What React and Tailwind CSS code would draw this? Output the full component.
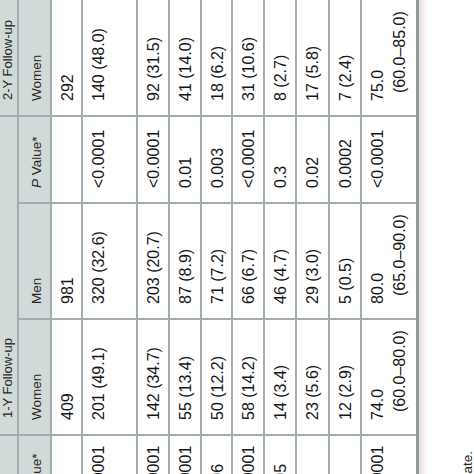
import React from "react";

const cols = [
  { key: "p0", w: "w-[79px]", pad: "pl-[9px]" },
  { key: "w1", w: "w-[116px]", pad: "pl-[14px]" },
  { key: "m1", w: "w-[116px]", pad: "pl-[14px]" },
  { key: "p1", w: "w-[87px]", pad: "pl-[14px]" },
  { key: "w2", w: "w-[140px]", pad: "pl-[14px]" },
];

const rows = [
  { h: "h-[31px]", p0: "", w1: "409", m1: "981", p1: "", w2: "292" },
  { h: "h-[55px]", p0: "<0.0001", w1: "201 (49.1)", m1: "320 (32.6)", p1: "<0.0001", w2: "140 (48.0)" },
  { h: "h-[32px]", p0: "<0.0001", w1: "142 (34.7)", m1: "203 (20.7)", p1: "<0.0001", w2: "92 (31.5)" },
  { h: "h-[32px]", p0: "<0.0001", w1: "55 (13.4)", m1: "87 (8.9)", p1: "0.01", w2: "41 (14.0)" },
  { h: "h-[31px]", p0: "0.006", w1: "50 (12.2)", m1: "71 (7.2)", p1: "0.003", w2: "18 (6.2)" },
  { h: "h-[32px]", p0: "<0.0001", w1: "58 (14.2)", m1: "66 (6.7)", p1: "<0.0001", w2: "31 (10.6)" },
  { h: "h-[32px]", p0: "0.005", w1: "14 (3.4)", m1: "46 (4.7)", p1: "0.3", w2: "8 (2.7)" },
  { h: "h-[33px]", p0: "0.2", w1: "23 (5.6)", m1: "29 (3.0)", p1: "0.02", w2: "17 (5.8)" },
  { h: "h-[32px]", p0: "0.4", w1: "12 (2.9)", m1: "5 (0.5)", p1: "0.0002", w2: "7 (2.4)" },
  {
    h: "h-[54px]",
    last: true,
    p0: "<0.0001",
    w1: ["74.0", "(60.0–80.0)"],
    m1: ["80.0", "(65.0–90.0)"],
    p1: "<0.0001",
    w2: ["75.0", "(60.0–85.0)"],
  },
];

const PValue = () => (
  <>
    <span className="italic">P</span> Value*
  </>
);

const Cell = ({ w, pad, children, last }) => (
  <div
    className={`${w} ${pad} shrink-0 pt-[5px] ${
      last ? "" : "border-r-2 border-[#a3adad]"
    }`}
  >
    {children}
  </div>
);

export default function App() {
  return (
    <div className="w-[474px] h-[474px] overflow-hidden bg-white font-['Liberation_Sans',Arial,sans-serif] text-[#161616]">
      <div className="w-max origin-top-left -rotate-90 translate-y-[513px]">
        <div className="flex flex-col border-b-[3px] border-[#8e9a9a] shadow-[0_3px_8px_rgba(175,120,120,0.35)] bg-white">
          {/* group header */}
          <div className="flex h-[19px] bg-[#d2dad9] border-b-2 border-[#a3adad] text-[13px] leading-[15px] text-[#262626]">
            <div className="w-[79px] shrink-0 border-r-2 border-[#a3adad]" />
            <div className="w-[319px] shrink-0 pl-[16px] border-r-2 border-[#a3adad] whitespace-nowrap">
              1-Y Follow-up
            </div>
            <div className="w-[140px] shrink-0 pl-[15px] whitespace-nowrap">
              2-Y Follow-up
            </div>
          </div>

          {/* column header */}
          <div className="flex h-[33px] bg-[#d2dad9] border-b-2 border-[#a3adad] text-[13.5px] leading-[18px] text-[#262626]">
            <div className="w-[79px] shrink-0 pl-[8px] pt-[9px] border-r-2 border-[#a3adad] whitespace-nowrap">
              <PValue />
            </div>
            <div className="w-[116px] shrink-0 pl-[14px] pt-[9px] border-r-2 border-[#a3adad]">
              Women
            </div>
            <div className="w-[116px] shrink-0 pl-[14px] pt-[9px] border-r-2 border-[#a3adad]">
              Men
            </div>
            <div className="w-[87px] shrink-0 pl-[14px] pt-[9px] border-r-2 border-[#a3adad] whitespace-nowrap">
              <PValue />
            </div>
            <div className="w-[140px] shrink-0 pl-[14px] pt-[9px]">Women</div>
          </div>

          {rows.map((row, i) => (
            <div
              key={i}
              className={`flex ${row.h} text-[16px] leading-[22px] ${
                row.last ? "" : "border-b-2 border-[#a3adad]"
              }`}
            >
              {cols.map((c, j) => {
                const v = row[c.key];
                return (
                  <Cell key={c.key} w={c.w} pad={c.pad} last={j === cols.length - 1}>
                    {Array.isArray(v) ? (
                      <>
                        <div className="whitespace-nowrap">{v[0]}</div>
                        <div className="whitespace-nowrap pl-[8px]">{v[1]}</div>
                      </>
                    ) : (
                      <span className="whitespace-nowrap">{v}</span>
                    )}
                  </Cell>
                );
              })}
            </div>
          ))}
        </div>

        <div className="mt-[41px] w-[62px] flex justify-end whitespace-nowrap text-[13.5px] leading-[15px] text-[#262626]">
          <span>Data are presented as n (%) or median (IQR), as appropriate.</span>
        </div>
      </div>
    </div>
  );
}
